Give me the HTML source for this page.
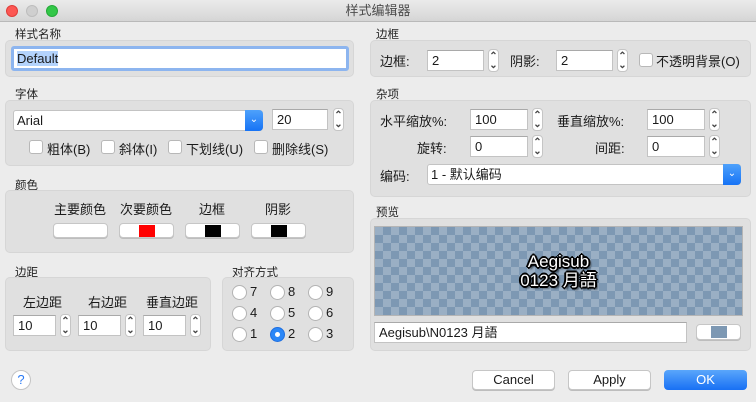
<!DOCTYPE html>
<html><head><meta charset="utf-8"><style>
*{box-sizing:border-box;margin:0;padding:0}
body{width:756px;height:402px;background:#ececec;font-family:"Liberation Sans","Noto Sans CJK SC",sans-serif;font-size:13px;color:#1a1a1a;position:relative;overflow:hidden}
.a{position:absolute}
.tb{left:0;top:0;width:756px;height:22px;background:linear-gradient(#ebebeb,#d5d5d5);border-bottom:1px solid #b9b9b9;text-align:center;line-height:22px;font-size:13px;color:#4d4d4d}
.dot{width:12px;height:12px;border-radius:50%;top:5px}
.lbl{font-size:11.5px;color:#222}
.g{background:#e0e0e0;border:1px solid #d6d6d6;border-radius:5px}
.in{background:#fff;border:1px solid #c3c3c3;border-top-color:#a9a9a9;height:21px;line-height:19px;padding-left:4px;font-size:13px}
.sp{width:11px;height:23px;background:#fff;border:1px solid #c5c5c5;border-radius:4px;font-size:10px;line-height:9px;text-align:center;color:#444;padding-top:2px;font-weight:bold}
.cb{width:14px;height:14px;background:#fff;border:1px solid #b8b8b8;border-radius:3px}
.btn{background:#fff;border:1px solid #c6c6c6;border-radius:4px;box-shadow:0 1px 0 #bdbdbd}
.rd{width:15px;height:15px;border-radius:50%;background:#fff;border:1px solid #b3b3b3}
.combo{background:#fff;border:1px solid #c3c3c3;height:21px;line-height:19px;padding-left:3px;border-radius:3px}
.cap{position:absolute;right:-1px;top:-1px;width:18px;height:21px;background:linear-gradient(#4ea1fb,#1673f5);border-radius:0 4px 4px 0;color:#fff;text-align:center;font-size:10px;line-height:19px}
.c{text-align:center}
</style></head><body>
<div class="a tb">样式编辑器</div>
<div class="a dot" style="left:6px;background:#fc5753;border:1px solid #df3d39"></div>
<div class="a dot" style="left:26px;background:#cfcfcf;border:1px solid #bdbdbd"></div>
<div class="a dot" style="left:46px;background:#33c748;border:1px solid #25a938"></div>

<div class="a lbl" style="left:15px;top:26px">样式名称</div>
<div class="a g" style="left:5px;top:40px;width:349px;height:37px"></div>
<div class="a in" style="left:11px;top:46px;width:338px;height:25px;border:3px solid #8db5ef;border-radius:3px;line-height:19px;padding-left:3px"><span style="background:#b4d3fc">Default</span></div>

<div class="a lbl" style="left:15px;top:86px">字体</div>
<div class="a g" style="left:5px;top:100px;width:349px;height:66px"></div>
<div class="a combo" style="left:13px;top:110px;width:250px">Arial<div class="cap">⌄</div></div>
<div class="a in" style="left:272px;top:109px;width:56px">20</div>
<div class="a sp" style="left:333px;top:108px">⌃<br>⌄</div>
<div class="a cb" style="left:29px;top:140px"></div><div class="a" style="left:47px;top:139px">粗体(B)</div>
<div class="a cb" style="left:101px;top:140px"></div><div class="a" style="left:119px;top:139px">斜体(I)</div>
<div class="a cb" style="left:168px;top:140px"></div><div class="a" style="left:186px;top:139px">下划线(U)</div>
<div class="a cb" style="left:254px;top:140px"></div><div class="a" style="left:272px;top:139px">删除线(S)</div>

<div class="a lbl" style="left:15px;top:177px">颜色</div>
<div class="a g" style="left:5px;top:190px;width:349px;height:63px"></div>
<div class="a c" style="left:50px;top:199px;width:60px">主要颜色</div>
<div class="a c" style="left:116px;top:199px;width:60px">次要颜色</div>
<div class="a c" style="left:182px;top:199px;width:60px">边框</div>
<div class="a c" style="left:248px;top:199px;width:60px">阴影</div>
<div class="a btn" style="left:53px;top:223px;width:55px;height:15px"></div>
<div class="a btn" style="left:119px;top:223px;width:55px;height:15px"><div class="a" style="left:19px;top:1px;width:16px;height:12px;background:#f00"></div></div>
<div class="a btn" style="left:185px;top:223px;width:55px;height:15px"><div class="a" style="left:19px;top:1px;width:16px;height:12px;background:#000"></div></div>
<div class="a btn" style="left:251px;top:223px;width:55px;height:15px"><div class="a" style="left:19px;top:1px;width:16px;height:12px;background:#000"></div></div>

<div class="a lbl" style="left:15px;top:264px">边距</div>
<div class="a g" style="left:5px;top:277px;width:206px;height:74px"></div>
<div class="a" style="left:23px;top:292px">左边距</div>
<div class="a" style="left:88px;top:292px">右边距</div>
<div class="a" style="left:146px;top:292px">垂直边距</div>
<div class="a in" style="left:13px;top:315px;width:43px">10</div><div class="a sp" style="left:60px;top:314px">⌃<br>⌄</div>
<div class="a in" style="left:78px;top:315px;width:43px">10</div><div class="a sp" style="left:125px;top:314px">⌃<br>⌄</div>
<div class="a in" style="left:143px;top:315px;width:43px">10</div><div class="a sp" style="left:190px;top:314px">⌃<br>⌄</div>

<div class="a lbl" style="left:232px;top:264px">对齐方式</div>
<div class="a g" style="left:222px;top:277px;width:132px;height:74px"></div>
<div class="a rd" style="left:232px;top:285px"></div><div class="a" style="left:250px;top:284px">7</div>
<div class="a rd" style="left:270px;top:285px"></div><div class="a" style="left:288px;top:284px">8</div>
<div class="a rd" style="left:308px;top:285px"></div><div class="a" style="left:326px;top:284px">9</div>
<div class="a rd" style="left:232px;top:306px"></div><div class="a" style="left:250px;top:305px">4</div>
<div class="a rd" style="left:270px;top:306px"></div><div class="a" style="left:288px;top:305px">5</div>
<div class="a rd" style="left:308px;top:306px"></div><div class="a" style="left:326px;top:305px">6</div>
<div class="a rd" style="left:232px;top:327px"></div><div class="a" style="left:250px;top:326px">1</div>
<div class="a rd" style="left:270px;top:327px;background:#2b87f7;border-color:#1f6fe0"><div class="a" style="left:4px;top:4px;width:5px;height:5px;border-radius:50%;background:#fff"></div></div><div class="a" style="left:288px;top:326px">2</div>
<div class="a rd" style="left:308px;top:327px"></div><div class="a" style="left:326px;top:326px">3</div>

<div class="a" style="left:11px;top:370px;width:20px;height:20px;border-radius:50%;background:#fff;border:1px solid #c4c4c4;color:#2a7af5;text-align:center;line-height:18px;font-size:13px">?</div>

<div class="a lbl" style="left:376px;top:26px">边框</div>
<div class="a g" style="left:370px;top:40px;width:381px;height:37px"></div>
<div class="a" style="left:380px;top:51px">边框:</div>
<div class="a in" style="left:427px;top:50px;width:57px">2</div><div class="a sp" style="left:488px;top:49px">⌃<br>⌄</div>
<div class="a" style="left:510px;top:51px">阴影:</div>
<div class="a in" style="left:556px;top:50px;width:57px">2</div><div class="a sp" style="left:617px;top:49px">⌃<br>⌄</div>
<div class="a cb" style="left:639px;top:53px"></div><div class="a" style="left:656px;top:51px">不透明背景(O)</div>

<div class="a lbl" style="left:376px;top:86px">杂项</div>
<div class="a g" style="left:370px;top:100px;width:381px;height:97px"></div>
<div class="a" style="left:380px;top:111px">水平缩放%:</div>
<div class="a in" style="left:470px;top:109px;width:58px">100</div><div class="a sp" style="left:532px;top:108px">⌃<br>⌄</div>
<div class="a" style="left:557px;top:111px">垂直缩放%:</div>
<div class="a in" style="left:647px;top:109px;width:58px">100</div><div class="a sp" style="left:709px;top:108px">⌃<br>⌄</div>
<div class="a" style="left:417px;top:138px">旋转:</div>
<div class="a in" style="left:470px;top:136px;width:58px">0</div><div class="a sp" style="left:532px;top:135px">⌃<br>⌄</div>
<div class="a" style="left:595px;top:138px">间距:</div>
<div class="a in" style="left:647px;top:136px;width:58px">0</div><div class="a sp" style="left:709px;top:135px">⌃<br>⌄</div>
<div class="a" style="left:380px;top:166px">编码:</div>
<div class="a combo" style="left:427px;top:164px;width:314px">1 - 默认编码<div class="cap">⌄</div></div>

<div class="a lbl" style="left:376px;top:204px">预览</div>
<div class="a g" style="left:370px;top:218px;width:381px;height:133px"></div>
<div class="a" style="left:374px;top:226px;width:369px;height:90px;border:1px solid #b5b5b5;background-color:#9aafc4;background-image:linear-gradient(45deg,#7d98b3 25%,transparent 25%,transparent 75%,#7d98b3 75%),linear-gradient(45deg,#7d98b3 25%,transparent 25%,transparent 75%,#7d98b3 75%);background-size:16px 16px;background-position:0 0,8px 8px"></div>
<div class="a c" style="left:374px;top:252px;width:369px;color:#fff;font-size:17px;line-height:19px;text-shadow:-2px 0 #000,2px 0 #000,0 -2px #000,0 2px #000,-1px -1px #000,1px 1px #000,-1px 1px #000,1px -1px #000,2px 2px 2px #000">Aegisub<br>0123 月語</div>
<div class="a in" style="left:374px;top:322px;width:313px;height:21px">Aegisub\N0123 月語</div>
<div class="a btn" style="left:696px;top:324px;width:45px;height:16px"><div class="a" style="left:14px;top:1px;width:16px;height:12px;background:#7d98b3"></div></div>

<div class="a btn c" style="left:472px;top:370px;width:83px;height:20px;line-height:18px">Cancel</div>
<div class="a btn c" style="left:568px;top:370px;width:83px;height:20px;line-height:18px">Apply</div>
<div class="a c" style="left:664px;top:370px;width:83px;height:20px;line-height:20px;border-radius:4px;background:linear-gradient(#5aa6fb,#1870f4);color:#fff">OK</div>
</body></html>
